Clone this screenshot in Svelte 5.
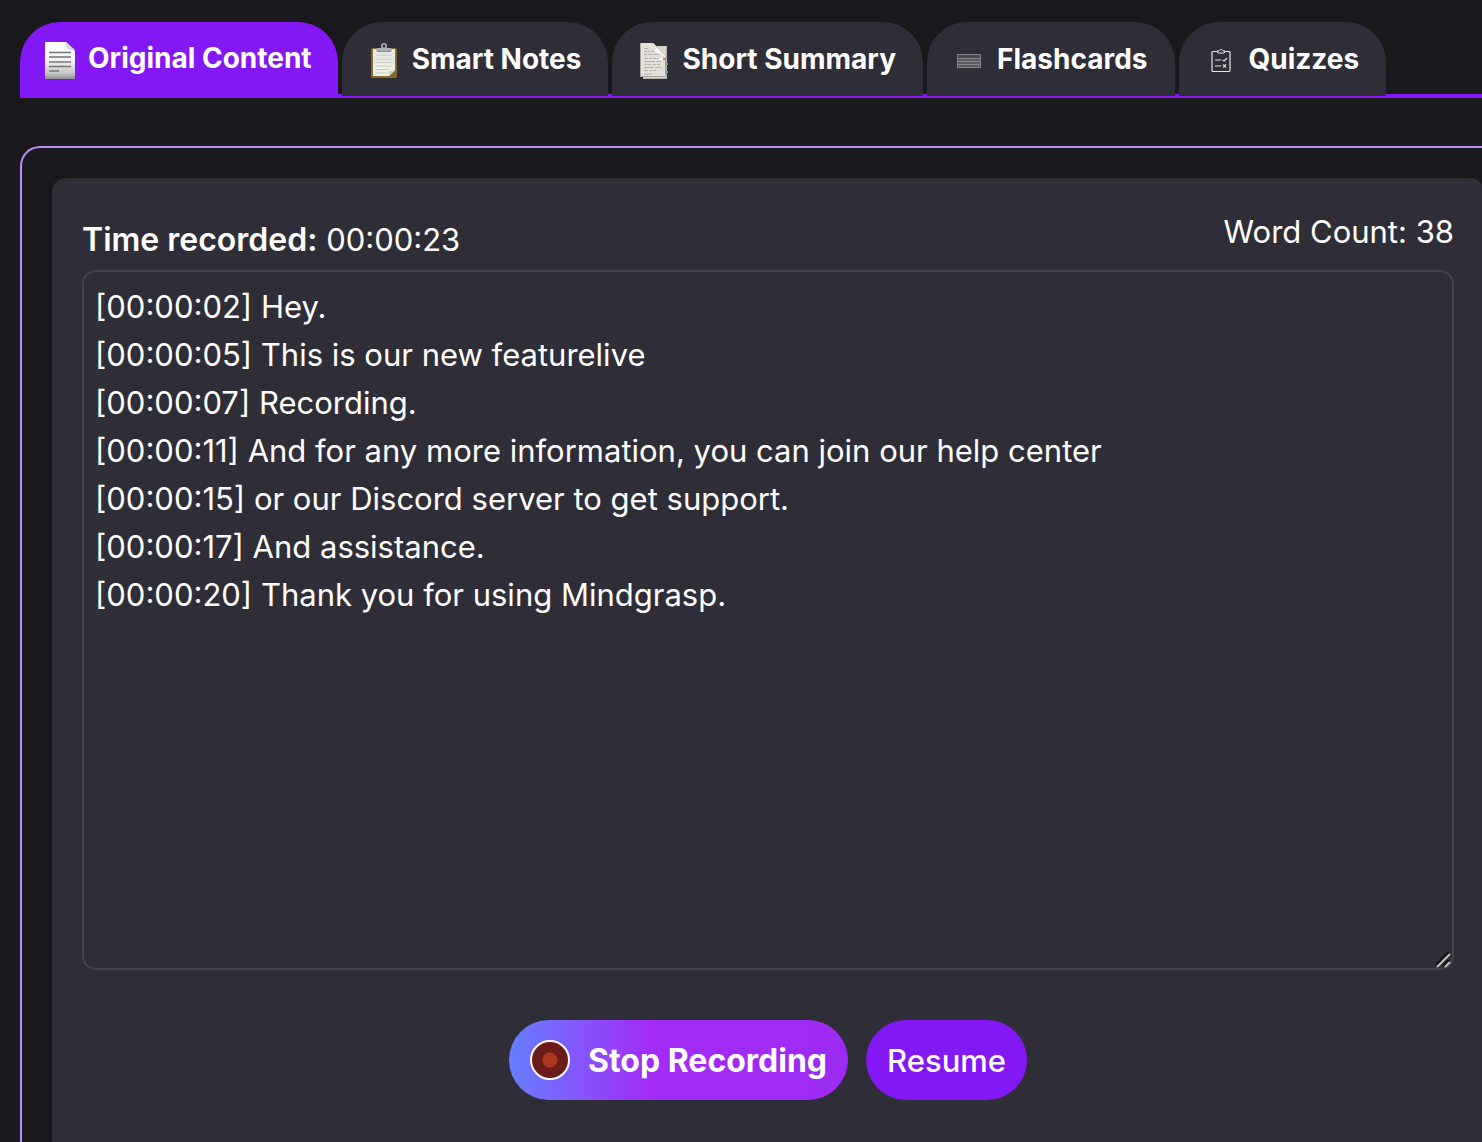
<script lang="ts">
  const tabs = [
    { id: 'original', label: 'Original Content' },
    { id: 'notes', label: 'Smart Notes' },
    { id: 'summary', label: 'Short Summary' },
    { id: 'cards', label: 'Flashcards' },
    { id: 'quizzes', label: 'Quizzes' },
  ];
  let active = $state('original');
  let transcript = $state(
    [
      '[00:00:02] Hey.',
      '[00:00:05] This is our new featurelive',
      '[00:00:07] Recording.',
      '[00:00:11] And for any more information, you can join our help center',
      '[00:00:15] or our Discord server to get support.',
      '[00:00:17] And assistance.',
      '[00:00:20] Thank you for using Mindgrasp.',
    ].join('\n')
  );
</script>

<main class="page">
  <nav class="tabs" aria-label="Content views">
    {#each tabs as tab (tab.id)}
      <button type="button" class="tab" class:active={active === tab.id} onclick={() => (active = tab.id)}>
        <span class="icon">
          {#if tab.id === 'original'}
            <svg width="32" height="40" viewBox="0 0 32 40" aria-hidden="true">
              <defs>
                <linearGradient id="sheet" x1="0" y1="0" x2="0" y2="1">
                  <stop offset="0" stop-color="#fff" />
                  <stop offset=".5" stop-color="#f5f5f5" />
                  <stop offset=".85" stop-color="#c4c4c4" />
                  <stop offset="1" stop-color="#8e8e8e" />
                </linearGradient>
              </defs>
              <path d="M1 2h21l9 9v28H1z" fill="url(#sheet)" />
              <path d="M22 2c0 5 0 8 9 8z" fill="#d4d4d4" />
              <path d="M5 12.500h22M5 17h22M5 22h22M5 26.500h22M5 31h10" stroke="#747474" stroke-width="1.300" />
            </svg>
          {:else if tab.id === 'notes'}
            <svg width="28" height="38" viewBox="0 0 28 38" aria-hidden="true">
              <rect x="1" y="6" width="26" height="30" rx="1.500" fill="#89682f" />
              <path d="M3 7h22v21l-6 6H3z" fill="#e6eae0" />
              <path d="M3 22h22v6l-6 6H3z" fill="#eef1e9" />
              <path d="M25 27l-6 7c.500-2 0-4-.500-5 2 .500 4 0 6.500-2z" fill="#c5cabb" />
              <path d="M5.500 13h17M5.500 17h17M5.500 20.500h17M5.500 24h17M5.500 27.500h14M5.500 31h12" stroke="#c6cbc0" />
              <circle cx="14" cy="4" r="2.300" fill="none" stroke="#b3b3ba" stroke-width="1.600" />
              <path d="M6 8a2 2 0 0 1 2-2h12a2 2 0 0 1 2 2l-1 2H7z" fill="#b0b0b5" />
              <path d="M7 9.500h14" stroke="#88888e" />
            </svg>
          {:else if tab.id === 'summary'}
            <svg width="30" height="40" viewBox="0 0 30 40" aria-hidden="true">
              <path d="M4 5h24v33H4z" fill="#d9d6cd" />
              <path d="M27.500 5v32.500H4" fill="none" stroke="#b5b2aa" />
              <path d="M1 2h13l12 12v21H1z" fill="#e4e1da" />
              <path d="M1.500 2v33M1 35.500h25.500V16" fill="none" stroke="#a5a29b" />
              <path d="M14 2c3 2 3 6 2 9 4 0 8 2 10 5v-2z" fill="#faf9f6" />
              <path d="M14 2l12 12" stroke="#b9b6ae" />
              <g stroke="#b5b2aa">
                <path d="M5 7.500h4M5 10.500h6m1 0h3M5 13.500h3m1 0h11" />
                <path d="M5 17.500h4m1 0h3m1 0h3m1 0h2M5 20.500h11m1 0h5M5 23.500h2m1 0h4m1 0h4m1 0h3M5 26.500h10m1 0h6M5 29.500h4m1 0h3m1 0h3M5 33h8" />
              </g>
              <path d="M20 18h4" stroke="#fff" stroke-width="2" />
              <path d="M24 18h3" stroke="#e86a8a" stroke-width="2" />
              <path d="M26 23h3" stroke="#62b257" stroke-width="2" />
              <path d="M26 31h3" stroke="#4da0f4" stroke-width="2" />
            </svg>
          {:else if tab.id === 'cards'}
            <svg width="24" height="16" viewBox="0 0 24 16" aria-hidden="true">
              <path d="M0 1h24v14H0z" fill="#5b5962" />
              <path d="M1 2h22v3H1z" fill="#484650" />
              <path d="M0 1.500h24M0 5.500h24M0 8.500h24M0 11.500h24M0 14.500h24M.5 1v14M23.500 1v14" fill="none" stroke="#85848a" />
            </svg>
          {:else}
            <svg width="20" height="24" viewBox="0 0 20 24" fill="none" stroke="#e6e6e8" aria-hidden="true">
              <path d="M6 2.500H2a1 1 0 0 0-1 1v18a1 1 0 0 0 1 1h16a1 1 0 0 0 1-1v-18a1 1 0 0 0-1-1h-4" stroke-width="1.200" />
              <path d="M6 2h2c0-2 4-2 4 0h2v1l-1 1H7L6 3z" />
              <path d="M4 11h6M4 17h6M11.500 11l1.500 1 3-3M12 15.500l3 3M15 15.500l-3 3" stroke-width="1.200" />
            </svg>
          {/if}
        </span>
        <span>{tab.label}</span>
      </button>
    {/each}
  </nav>

  <section class="frame">
    <div class="card">
      <div class="meta">
        <p class="time"><strong>Time recorded:</strong> 00:00:23</p>
        <p class="count">Word Count: 38</p>
      </div>
      <div class="editor">
        <textarea aria-label="Transcript" spellcheck="false" bind:value={transcript}></textarea>
        <svg class="grip" width="16" height="16" viewBox="0 0 16 16" aria-hidden="true">
          <path d="M0 14L13 1M8 14l5-5" stroke="#111116" stroke-width="4" />
          <path d="M1 15L14 2M9 15l5-5" stroke="#c4c4c6" stroke-width="2" />
        </svg>
      </div>
      <div class="actions">
        <button type="button" class="stop"><span class="dot"></span>Stop Recording</button>
        <button type="button" class="resume">Resume</button>
      </div>
    </div>
  </section>
</main>

<style>
  :global(body) {
    margin: 0;
    background: #19181c;
  }
  .page {
    box-sizing: border-box;
    min-height: 100vh;
    padding: 22px 0 0 20px;
    display: flex;
    flex-direction: column;
    overflow: hidden;
    color: #fff;
    font-family: Inter, 'Liberation Sans', sans-serif;
  }
  button,
  textarea {
    font: inherit;
    color: inherit;
  }
  button {
    border: 0;
    cursor: pointer;
  }
  .tabs {
    display: flex;
    gap: 4px;
    height: 72px;
    border-bottom: 4px solid #8318f5;
    white-space: nowrap;
  }
  .tab {
    display: flex;
    align-items: center;
    height: 74px;
    padding: 0 27px 0 26px;
    gap: 12px;
    border-radius: 40px 40px 0 0;
    background: #2f2d37;
    font-size: 28px;
    font-weight: 700;
    flex: none;
  }
  .tab.active {
    height: 76px;
    padding: 0 26px 4px 24px;
    background: #8318f5;
  }
  .icon {
    display: flex;
    justify-content: center;
    flex: none;
    width: 32px;
    padding-top: 4px;
  }
  .frame {
    flex: 1;
    display: flex;
    margin: 48px -34px 0 0;
    padding: 30px 30px 0;
    border: 2px solid #bd8af7;
    border-bottom: 0;
    border-radius: 20px 20px 0 0;
  }
  .card {
    flex: 1;
    box-sizing: border-box;
    padding: 30px 30px 42px;
    border-radius: 14px 14px 0 0;
    background: #2f2d37;
    font-size: 31px;
  }
  .meta {
    display: flex;
    justify-content: space-between;
    height: 62px;
    line-height: 48px;
  }
  .meta p {
    margin: 0;
  }
  .time {
    padding-top: 8px;
  }
  .time strong {
    font-size: 32px;
    font-weight: 600;
  }
  .editor {
    position: relative;
    display: flex;
  }
  textarea {
    flex: 1;
    box-sizing: border-box;
    height: 700px;
    padding: 11px;
    border: 2px solid #45434b;
    border-radius: 14px;
    background: transparent;
    line-height: 48px;
    resize: none;
    outline: 0;
  }
  .grip {
    position: absolute;
    right: 2px;
    bottom: 2px;
  }
  .actions {
    display: flex;
    justify-content: center;
    gap: 18px;
    margin-top: 50px;
  }
  .actions button {
    display: flex;
    align-items: center;
    height: 80px;
    border-radius: 40px;
    background: #8318f5;
    padding: 0 21px;
  }
  .actions .stop {
    gap: 18px;
    font-size: 32px;
    font-weight: 700;
    background: linear-gradient(90deg, #667eff 0%, #a32bf6 42%, #9d2bf3 100%);
  }
  .dot {
    box-sizing: border-box;
    width: 40px;
    height: 40px;
    border: 2px solid #fff;
    border-radius: 50%;
    background: radial-gradient(circle, #ae3721 7px, #6b1b1a 8px);
  }
  .actions .resume {
    font-weight: 500;
  }
</style>
